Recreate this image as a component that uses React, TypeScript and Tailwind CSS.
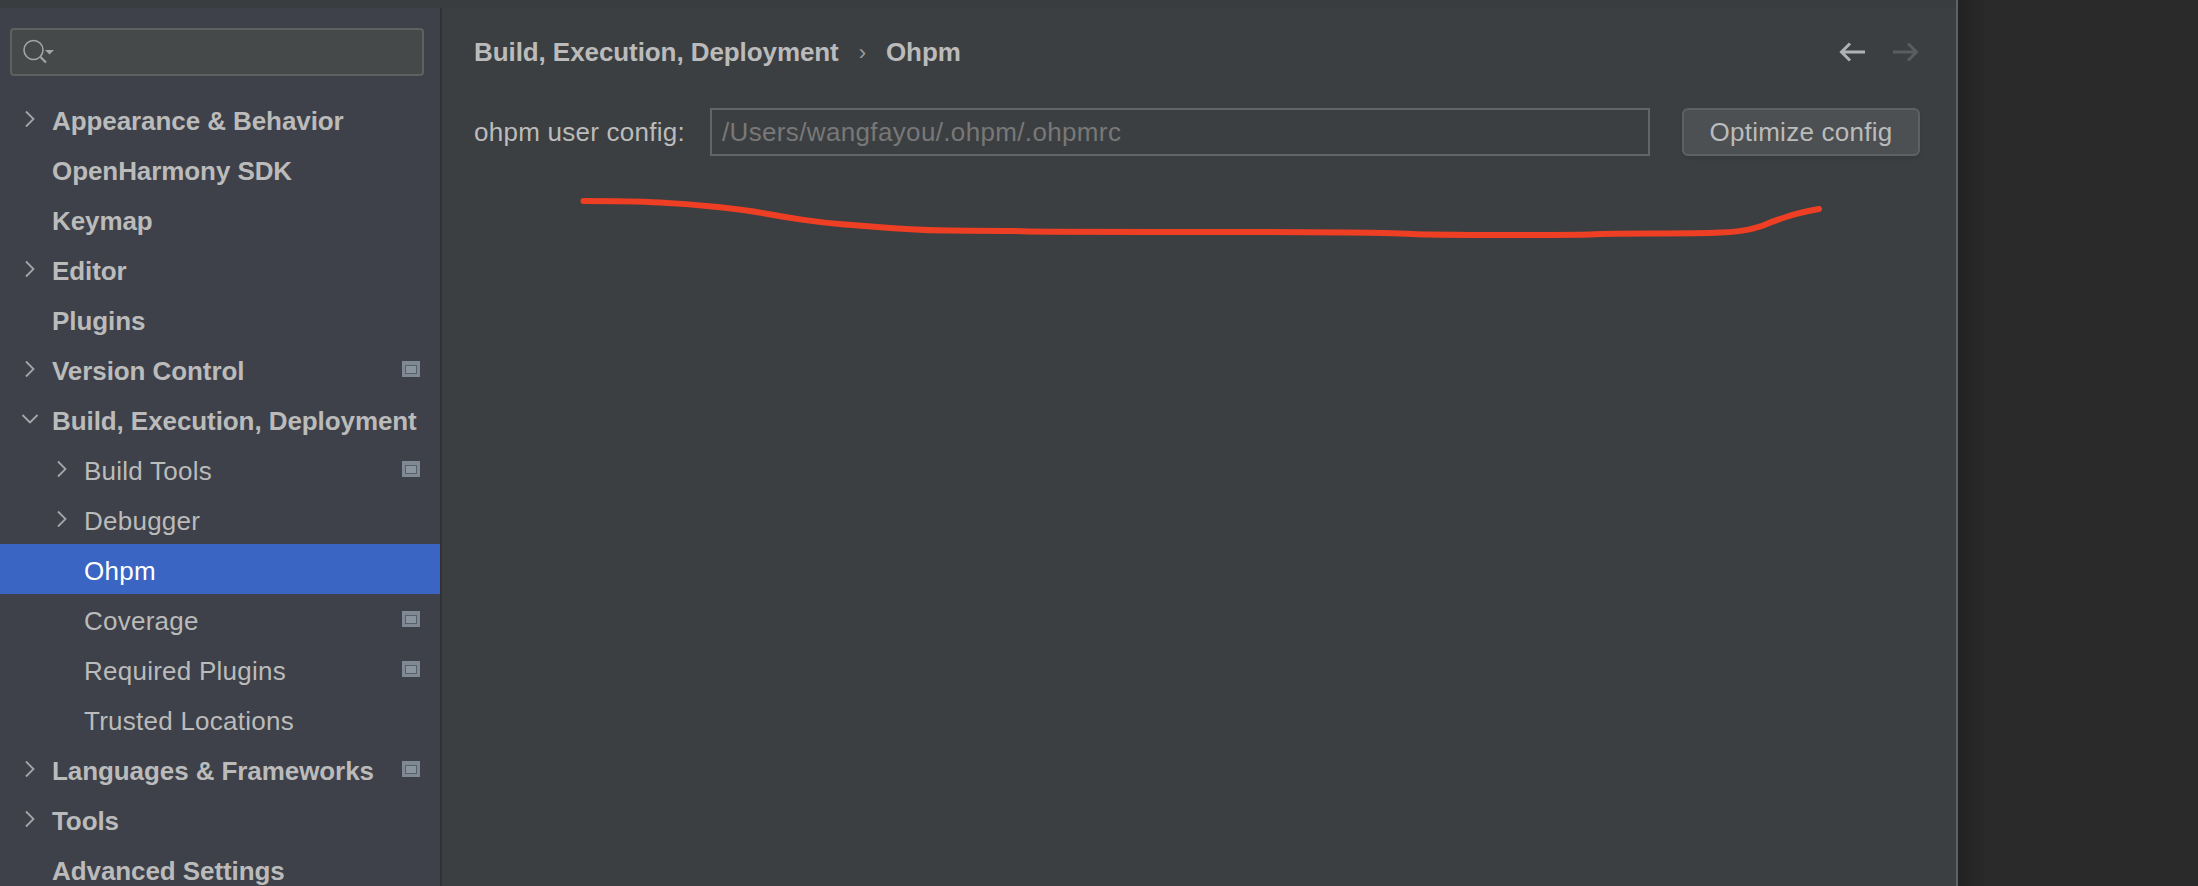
function Chevron({ open }: { open?: boolean }) {
  return (
    <svg width="12" height="18" viewBox="0 0 12 18" className={open ? "rotate-90" : ""} fill="none" stroke="#a4a6a9" strokeWidth="1.8">
      <path d="M2 1.500 9.500 9 2 16.500" />
    </svg>
  );
}

function ProjectIcon() {
  return (
    <span className="flex h-4 w-[18px] shrink-0 items-start justify-center bg-[#7f8994] pt-1">
      <span className="h-[9px] w-[12px] border border-[#56606b] bg-[#8a949f]" />
    </span>
  );
}

type Row = { label: string; level: 0 | 1; arrow?: "closed" | "open"; project?: boolean; selected?: boolean };

const rows: Row[] = [
  { label: "Appearance & Behavior", level: 0, arrow: "closed" },
  { label: "OpenHarmony SDK", level: 0 },
  { label: "Keymap", level: 0 },
  { label: "Editor", level: 0, arrow: "closed" },
  { label: "Plugins", level: 0 },
  { label: "Version Control", level: 0, arrow: "closed", project: true },
  { label: "Build, Execution, Deployment", level: 0, arrow: "open" },
  { label: "Build Tools", level: 1, arrow: "closed", project: true },
  { label: "Debugger", level: 1, arrow: "closed" },
  { label: "Ohpm", level: 1, selected: true },
  { label: "Coverage", level: 1, project: true },
  { label: "Required Plugins", level: 1, project: true },
  { label: "Trusted Locations", level: 1 },
  { label: "Languages & Frameworks", level: 0, arrow: "closed", project: true },
  { label: "Tools", level: 0, arrow: "closed" },
  { label: "Advanced Settings", level: 0 },
];

// the hand-drawn annotation, smoothed through the midpoints
const stroke: [number, number][] = [
  [583.5, 201], [631, 201], [689, 204], [746, 210], [784, 217], [823, 222.7], [861, 225.7], [926, 230.7],
  [1014, 230.7], [1032, 232], [1370, 232], [1428, 235], [1584, 235], [1605, 233.5], [1702, 233.5],
  [1739, 231.7], [1760, 227], [1771, 222], [1798, 213], [1819, 209],
];

function strokePath() {
  let d = `M${stroke[0][0]} ${stroke[0][1]}`;
  for (let i = 1; i < stroke.length - 1; i++) {
    const [x, y] = stroke[i];
    const [nx, ny] = stroke[i + 1];
    d += ` Q${x} ${y} ${(x + nx) / 2} ${(y + ny) / 2}`;
  }
  const last = stroke[stroke.length - 1];
  return `${d} L${last[0]} ${last[1]}`;
}

function TreeRow({ row }: { row: Row }) {
  return (
    <div
      className={`relative flex h-[50px] shrink-0 items-center pr-5 text-[26px] ${
        row.level === 0 ? "pl-[52px] font-bold tracking-[-0.08px]" : "pl-[84px] tracking-[0.25px]"
      } ${row.selected ? "bg-[#3a65c3] text-white" : "text-[#bbbbbb]"}`}
    >
      {row.arrow && (
        <span className={`absolute top-[16px] flex h-[18px] w-[12px] ${row.level === 0 ? "left-[24px]" : "left-[56px]"}`}>
          <Chevron open={row.arrow === "open"} />
        </span>
      )}
      <span className="flex-1 pt-1">{row.label}</span>
      {row.project && <ProjectIcon />}
    </div>
  );
}

export default function App() {
  return (
    <div className="relative flex h-[886px] w-[2198px] overflow-hidden bg-[#2a2a2a] font-['Liberation_Sans',sans-serif]">
      <div className="flex w-[1956px] shrink-0 flex-col bg-[#3c3f41]">
        <div className="h-2 shrink-0 bg-[#3a3d3f]" />
        <div className="flex min-h-0 flex-1">
          <aside className="flex w-[440px] shrink-0 flex-col overflow-hidden bg-[#3e4149]">
            <div className="pt-5 pr-4 pb-[18px] pl-[10px]">
              <div className="flex h-12 items-center rounded-[4px] border-2 border-[#5f6060] bg-[#45494a] pl-[10px]">
                <svg width="34" height="26" viewBox="0 0 34 26" fill="none" stroke="#a2a4a6" strokeWidth="1.6">
                  <circle cx="11.500" cy="11" r="9.500" />
                  <path d="M18.500 18 24 23.500" strokeWidth="2.200" />
                  <path d="M23 11h9l-4.500 4.500z" fill="#a2a4a6" stroke="none" />
                </svg>
              </div>
            </div>
            {rows.map((row) => (
              <TreeRow key={row.label} row={row} />
            ))}
          </aside>
          <div className="w-[2px] shrink-0 bg-[#323232]" />
          <main className="min-w-0 flex-1 px-[32px] pt-[26px]">
            <div className="flex h-9 items-center text-[26px] font-bold tracking-[-0.08px] text-[#bbbbbb]">
              <span>Build, Execution, Deployment</span>
              <span className="mx-5 text-[22px] font-normal text-[#9a9c9e]">›</span>
              <span>Ohpm</span>
              <div className="mr-[5px] ml-auto flex items-center gap-[28px]">
                <svg width="26" height="20" viewBox="0 0 26 20" fill="none" stroke="#afb1b3" strokeWidth="3">
                  <path d="M26 10H3M11 1.500 2.500 10l8.500 8.500" />
                </svg>
                <svg width="26" height="20" viewBox="0 0 26 20" fill="none" stroke="#5a5d5f" strokeWidth="3">
                  <path d="M0 10h23M15 1.500l8.500 8.500-8.500 8.500" />
                </svg>
              </div>
            </div>
            <div className="mt-[38px] flex items-center text-[26px] tracking-[0.25px] text-[#bbbbbb]">
              <span className="w-[236px] shrink-0">ohpm user config:</span>
              <div className="flex h-12 w-[940px] items-center border-2 border-[#646464] pl-[10px] tracking-[0.35px] text-[#787878]">
                /Users/wangfayou/.ohpm/.ohpmrc
              </div>
              <button className="ml-[32px] h-12 w-[238px] rounded-[6px] border-2 border-[#5e6162] bg-[#4c5052] text-[#bbbbbb] shadow-[0_3px_3px_#383b3d]">
                Optimize config
              </button>
            </div>
          </main>
        </div>
      </div>
      <div className="w-[2px] shrink-0 bg-[#5f6162]" />
      <div className="flex-1 bg-linear-to-r from-[#222222] to-[#2a2a2a] to-[12%]" />
      <svg className="absolute top-0 left-0" width="1956" height="300" viewBox="0 0 1956 300" fill="none" stroke="#ee3f24" strokeWidth="6" strokeLinecap="round" strokeLinejoin="round">
        <path d={strokePath()} />
      </svg>
    </div>
  );
}
